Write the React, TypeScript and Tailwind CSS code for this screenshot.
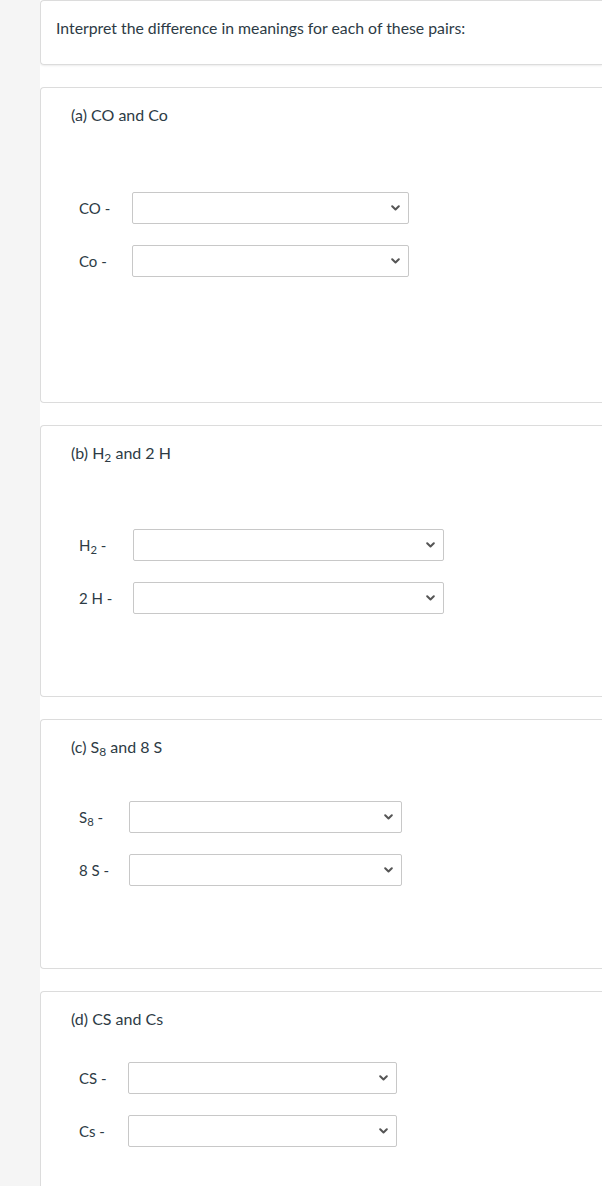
import React from 'react';

type Row = { label: React.ReactNode };

type Part = {
  title: React.ReactNode;
  rows: Row[];
  height: string;
  gap: string;
  labelCol: string;
  selectW: string;
};

const H2 = (
  <>
    H<sub>2</sub>
  </>
);
const S8 = (
  <>
    S<sub>8</sub>
  </>
);

const PARTS: Part[] = [
  {
    title: '(a) CO and Co',
    rows: [{ label: 'CO -' }, { label: 'Co -' }],
    height: 'h-[316px]',
    gap: 'mt-[65px]',
    labelCol: 'w-[53px]',
    selectW: 'w-[277px]',
  },
  {
    title: <>(b) {H2} and 2 H</>,
    rows: [{ label: <>{H2} -</> }, { label: '2 H -' }],
    height: 'h-[272px]',
    gap: 'mt-[64px]',
    labelCol: 'w-[54px]',
    selectW: 'w-[311px]',
  },
  {
    title: <>(c) {S8} and 8 S</>,
    rows: [{ label: <>{S8} -</> }, { label: '8 S -' }],
    height: 'h-[250px]',
    gap: 'mt-[42px]',
    labelCol: 'w-[50px]',
    selectW: 'w-[273px]',
  },
  {
    title: '(d) CS and Cs',
    rows: [{ label: 'CS -' }, { label: 'Cs -' }],
    height: 'h-[260px]',
    gap: 'mt-[31px]',
    labelCol: 'w-[49px]',
    selectW: 'w-[269px]',
  },
];

function Chevron() {
  return (
    <svg width="9" height="6" viewBox="0 0 9 6" fill="none">
      <path d="M1.2 1.2l3.3 3.3 3.3-3.3" stroke="#555" strokeWidth="2" strokeLinecap="round" strokeLinejoin="round" />
    </svg>
  );
}

function Dropdown({ width }: { width: string }) {
  return (
    <div className={`${width} h-[32px] border border-[#c8c8c8] rounded-[2px] bg-white flex items-center justify-end pr-[8px]`}>
      <Chevron />
    </div>
  );
}

export default function App() {
  return (
    <div
      className="flex h-[1186px] overflow-hidden bg-white text-[#2d3b45]"
      style={{ fontFamily: 'Lato, "Open Sans", sans-serif' }}
    >
      {/* left gutter */}
      <div className="w-[40px] shrink-0 bg-[#f5f5f5]" />

      <div className="flex-1 flex flex-col gap-[22px] overflow-hidden">
        {/* question stem */}
        <div className="h-[65px] shrink-0 border border-r-0 border-[#dcdcdc] rounded-l-[4px] shadow-[0_1px_2px_rgba(0,0,0,0.08)] pl-[15px] pt-[15px] text-[15.8px] leading-[24px]">
          Interpret the difference in meanings for each of these pairs:
        </div>

        {PARTS.map((p, i) => (
          <div
            key={i}
            className={`${p.height} shrink-0 border border-r-0 border-[#dcdcdc] rounded-l-[4px] pl-[30px] pt-[15px]`}
          >
            <p className="text-[16px] leading-[24px]">{p.title}</p>
            <div className={`${p.gap} flex flex-col gap-[21px] pl-[8px]`}>
              {p.rows.map((r, j) => (
                <div key={j} className="flex items-center">
                  <span className={`${p.labelCol} shrink-0 text-[15px] leading-[20px]`}>{r.label}</span>
                  <Dropdown width={p.selectW} />
                </div>
              ))}
            </div>
          </div>
        ))}
      </div>
    </div>
  );
}
